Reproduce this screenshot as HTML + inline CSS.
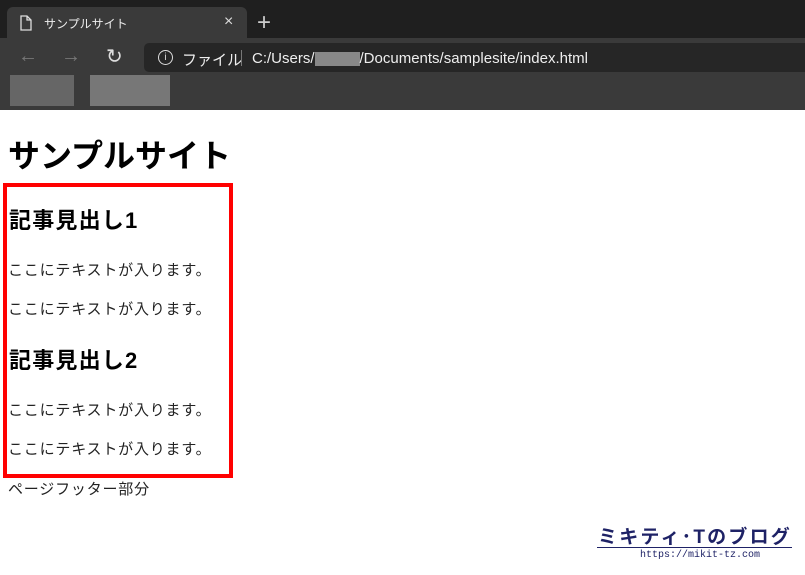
<!DOCTYPE html><html><head><meta charset="utf-8"><style>
body{margin:0;width:805px;height:575px;overflow:hidden;background:#fff;font-family:"Liberation Sans","Noto Sans CJK JP",sans-serif;position:relative}
.a{position:absolute}
.t{font-size:15px;color:#222;letter-spacing:0.8px}
.h{font-size:22px;font-weight:bold;letter-spacing:1.2px}
</style></head><body>
<div class="a" style="left:0;top:0;width:805px;height:38px;background:#1f1f1f"></div>
<div class="a" style="left:7px;top:7px;width:240px;height:32px;background:#3a3a3a;border-radius:6px 6px 0 0"></div>
<svg class="a" style="left:19px;top:15px" width="14" height="16"><path d="M2 1h6l4 4v10H2z M8 1v4h4" fill="none" stroke="#ddd" stroke-width="1.3"/></svg>
<div class="a" style="left:44px;top:15px;color:#eee;font-size:12px">サンプルサイト</div>
<div class="a" style="left:224px;top:13px;color:#ddd;font-size:16px">×</div>
<div class="a" style="left:257px;top:9px;color:#ccc;font-size:24px;font-weight:300">+</div>
<div class="a" style="left:0;top:38px;width:805px;height:35px;background:#3a3a3a"></div>
<div class="a" style="left:18px;top:45px;color:#777;font-size:20px">←</div>
<div class="a" style="left:61px;top:45px;color:#777;font-size:20px">→</div>
<div class="a" style="left:106px;top:44px;color:#ddd;font-size:20px">↻</div>
<div class="a" style="left:144px;top:43px;width:661px;height:29px;background:#262626;border-radius:5px 0 0 5px"></div>
<div class="a" style="left:158px;top:50px;width:13px;height:13px;border:1.3px solid #ddd;border-radius:50%;color:#ddd;font-size:10px;text-align:center;line-height:13px">i</div>
<div class="a" style="left:182px;top:49px;color:#eee;font-size:15px">ファイル</div>
<div class="a" style="left:241px;top:50px;width:1px;height:16px;background:#777"></div>
<div class="a" style="left:252px;top:50px;color:#eee;font-size:15px">C:/Users/<span style="display:inline-block;width:45px;height:14px;background:#888;vertical-align:middle"></span>/Documents/samplesite/index.html</div>
<div class="a" style="left:0;top:73px;width:805px;height:37px;background:#3a3a3a"></div>
<div class="a" style="left:10px;top:75px;width:64px;height:31px;background:#666"></div>
<div class="a" style="left:90px;top:75px;width:80px;height:31px;background:#777"></div>
<div class="a" style="left:8px;top:131px;font-size:32px;font-weight:bold">サンプルサイト</div>
<div class="a" style="left:3px;top:183px;width:222px;height:287px;border:4px solid #f00"></div>
<div class="a h" style="left:9px;top:203px">記事見出し1</div>
<div class="a t" style="left:8px;top:259px">ここにテキストが入ります。</div>
<div class="a t" style="left:8px;top:298px">ここにテキストが入ります。</div>
<div class="a h" style="left:9px;top:343px">記事見出し2</div>
<div class="a t" style="left:8px;top:399px">ここにテキストが入ります。</div>
<div class="a t" style="left:8px;top:438px">ここにテキストが入ります。</div>
<div class="a t" style="left:8px;top:478px">ページフッター部分</div>
<div class="a" style="left:598px;top:522px;font-size:19px;font-weight:bold;color:#1e2266;letter-spacing:2.2px">ミキティ･Tのブログ</div>
<div class="a" style="left:597px;top:547px;width:195px;height:1px;background:#1e2266"></div>
<div class="a" style="left:640px;top:550px;font-size:10px;color:#1e2266;font-family:'Liberation Mono',monospace">https://mikit-tz.com</div>
</body></html>
